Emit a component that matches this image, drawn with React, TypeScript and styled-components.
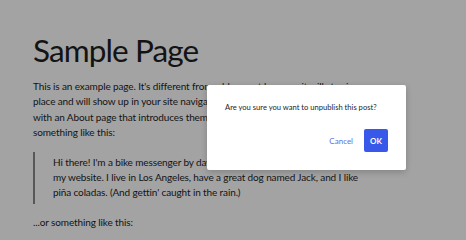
import React from "react";
import styled, { createGlobalStyle } from "styled-components";

const GlobalStyle = createGlobalStyle`
  html, body {
    margin: 0;
    padding: 0;
    background: #ffffff;
  }
  body {
    font-family: Lato, "Open Sans", "DejaVu Sans", sans-serif;
    color: #1e1e1e;
  }
`;

const Screen = styled.div`
  position: relative;
  width: 466px;
  height: 240px;
  overflow: hidden;
`;

const Article = styled.div`
  padding: 28px 0 0 33px;
`;

const Title = styled.h1`
  margin: 0 0 7px;
  font-size: 31.5px;
  font-weight: 400;
  line-height: 44px;
  letter-spacing: -0.9px;
`;

const Paragraph = styled.p`
  margin: 0;
  font-size: 10px;
  line-height: 15.4px;
  letter-spacing: -0.12px;
  white-space: nowrap;
`;

const Quote = styled.blockquote`
  margin: 11px 0 11px;
  padding: 3px 0 3px 18px;
  border-left: 2px solid #8a8a8a;

  p {
    margin: 0;
    font-size: 10px;
    line-height: 15.4px;
    letter-spacing: -0.12px;
    white-space: nowrap;
  }
`;

const Overlay = styled.div`
  position: absolute;
  inset: 0;
  background: rgba(0, 0, 0, 0.36);
`;

const Modal = styled.div`
  position: absolute;
  left: 207px;
  top: 85px;
  width: 199px;
  height: 85px;
  box-sizing: border-box;
  padding: 16px 18px 18px;
  background: #ffffff;
  border-radius: 2px;
  box-shadow: 0 2px 6px rgba(0, 0, 0, 0.2);
  display: flex;
  flex-direction: column;
  justify-content: space-between;
`;

const Message = styled.p`
  margin: 0;
  font-size: 7.6px;
  line-height: 12px;
  color: #1e1e1e;
  white-space: nowrap;
`;

const Actions = styled.div`
  display: flex;
  justify-content: flex-end;
  align-items: center;
  gap: 11px;
`;

const Button = styled.button<{ $primary?: boolean }>`
  font-family: inherit;
  font-size: 8px;
  font-weight: ${(p) => (p.$primary ? 700 : 400)};
  height: 23px;
  padding: ${(p) => (p.$primary ? "0 6px" : "0")};
  min-width: ${(p) => (p.$primary ? "24px" : "auto")};
  border: none;
  border-radius: 2px;
  background: ${(p) => (p.$primary ? "#3858e9" : "transparent")};
  color: ${(p) => (p.$primary ? "#ffffff" : "#5a72e0")};
  cursor: pointer;
`;

export default function App() {
  return (
    <Screen>
      <GlobalStyle />
      <Article>
        <Title>Sample Page</Title>
        <Paragraph>
          This is an example page. It's different from a blog post because it
          will stay in one
          <br />
          place and will show up in your site navigation (in most themes). Most
          people start
          <br />
          with an About page that introduces them to potential site visitors. It
          might say
          <br />
          something like this:
        </Paragraph>
        <Quote>
          <p>
            Hi there! I'm a bike messenger by day, aspiring actor by night, and
            this is
            <br />
            my website. I live in Los Angeles, have a great dog named Jack, and
            I like
            <br />
            piña coladas. (And gettin' caught in the rain.)
          </p>
        </Quote>
        <Paragraph>...or something like this:</Paragraph>
      </Article>
      <Overlay />
      <Modal role="dialog">
        <Message>Are you sure you want to unpublish this post?</Message>
        <Actions>
          <Button>Cancel</Button>
          <Button $primary>OK</Button>
        </Actions>
      </Modal>
    </Screen>
  );
}
